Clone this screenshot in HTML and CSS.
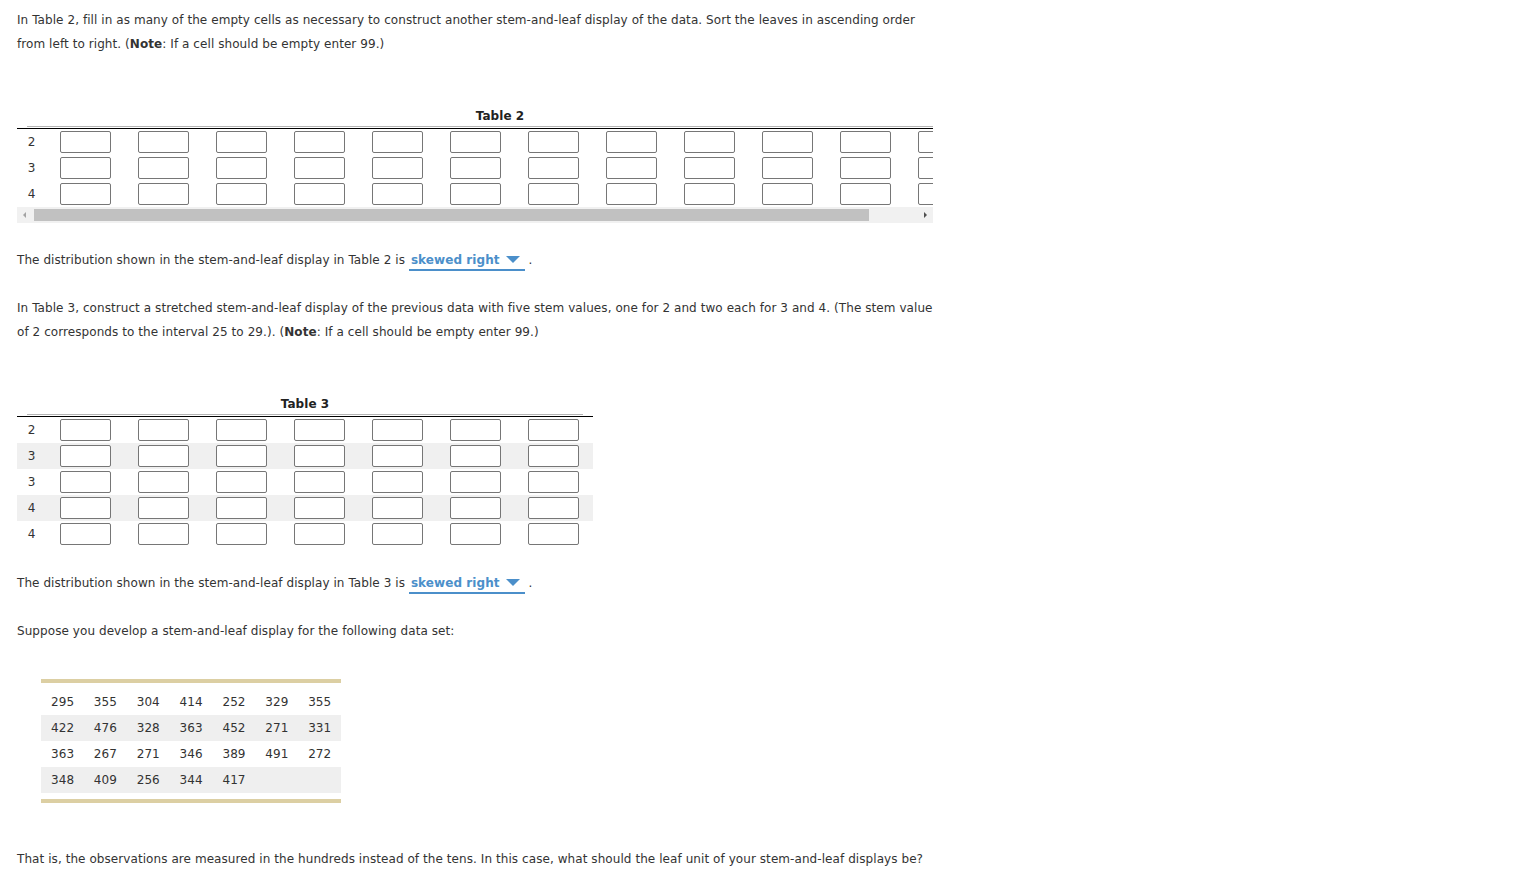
FILE: index.html
```html
<!DOCTYPE html>
<html>
<head>
<meta charset="utf-8">
<link rel="stylesheet" href="styles.css">
</head>
<body>
<div class="page">
  <p class="para">In Table 2, fill in as many of the empty cells as necessary to construct another stem-and-leaf display of the data. Sort the leaves in ascending order from left to right. (<b>Note</b>: If a cell should be empty enter 99.)</p>

  <div class="scroll-wrap t2">
    <div class="scroll-clip">
      <div class="stem-table wide">
        <div class="caption">Table 2</div>
        <div class="rule-grey"></div>
        <div class="rule-black"></div>
        <div class="row"><div class="stem">2</div><div class="cell"><span class="box"></span></div><div class="cell"><span class="box"></span></div><div class="cell"><span class="box"></span></div><div class="cell"><span class="box"></span></div><div class="cell"><span class="box"></span></div><div class="cell"><span class="box"></span></div><div class="cell"><span class="box"></span></div><div class="cell"><span class="box"></span></div><div class="cell"><span class="box"></span></div><div class="cell"><span class="box"></span></div><div class="cell"><span class="box"></span></div><div class="cell"><span class="box"></span></div></div>
        <div class="row"><div class="stem">3</div><div class="cell"><span class="box"></span></div><div class="cell"><span class="box"></span></div><div class="cell"><span class="box"></span></div><div class="cell"><span class="box"></span></div><div class="cell"><span class="box"></span></div><div class="cell"><span class="box"></span></div><div class="cell"><span class="box"></span></div><div class="cell"><span class="box"></span></div><div class="cell"><span class="box"></span></div><div class="cell"><span class="box"></span></div><div class="cell"><span class="box"></span></div><div class="cell"><span class="box"></span></div></div>
        <div class="row"><div class="stem">4</div><div class="cell"><span class="box"></span></div><div class="cell"><span class="box"></span></div><div class="cell"><span class="box"></span></div><div class="cell"><span class="box"></span></div><div class="cell"><span class="box"></span></div><div class="cell"><span class="box"></span></div><div class="cell"><span class="box"></span></div><div class="cell"><span class="box"></span></div><div class="cell"><span class="box"></span></div><div class="cell"><span class="box"></span></div><div class="cell"><span class="box"></span></div><div class="cell"><span class="box"></span></div></div>
      </div>
    </div>
    <div class="hscroll">
      <span class="arrow-left"></span>
      <span class="thumb"></span>
      <span class="arrow-right"></span>
    </div>
  </div>

  <p class="line gap-25">The distribution shown in the stem-and-leaf display in Table 2 is <span class="dropdown">skewed right<span class="caret"></span></span> .</p>

  <p class="para gap-24">In Table 3, construct a stretched stem-and-leaf display of the previous data with five stem values, one for 2 and two each for 3 and 4. (The stem value of 2 corresponds to the interval 25 to 29.). (<b>Note</b>: If a cell should be empty enter 99.)</p>

  <div class="stem-table narrow t3">
    <div class="caption">Table 3</div>
    <div class="rule-grey"></div>
    <div class="rule-black"></div>
    <div class="row"><div class="stem">2</div><div class="cell"><span class="box"></span></div><div class="cell"><span class="box"></span></div><div class="cell"><span class="box"></span></div><div class="cell"><span class="box"></span></div><div class="cell"><span class="box"></span></div><div class="cell"><span class="box"></span></div><div class="cell"><span class="box"></span></div></div>
    <div class="row shade"><div class="stem">3</div><div class="cell"><span class="box"></span></div><div class="cell"><span class="box"></span></div><div class="cell"><span class="box"></span></div><div class="cell"><span class="box"></span></div><div class="cell"><span class="box"></span></div><div class="cell"><span class="box"></span></div><div class="cell"><span class="box"></span></div></div>
    <div class="row"><div class="stem">3</div><div class="cell"><span class="box"></span></div><div class="cell"><span class="box"></span></div><div class="cell"><span class="box"></span></div><div class="cell"><span class="box"></span></div><div class="cell"><span class="box"></span></div><div class="cell"><span class="box"></span></div><div class="cell"><span class="box"></span></div></div>
    <div class="row shade"><div class="stem">4</div><div class="cell"><span class="box"></span></div><div class="cell"><span class="box"></span></div><div class="cell"><span class="box"></span></div><div class="cell"><span class="box"></span></div><div class="cell"><span class="box"></span></div><div class="cell"><span class="box"></span></div><div class="cell"><span class="box"></span></div></div>
    <div class="row"><div class="stem">4</div><div class="cell"><span class="box"></span></div><div class="cell"><span class="box"></span></div><div class="cell"><span class="box"></span></div><div class="cell"><span class="box"></span></div><div class="cell"><span class="box"></span></div><div class="cell"><span class="box"></span></div><div class="cell"><span class="box"></span></div></div>
  </div>

  <p class="line gap-24">The distribution shown in the stem-and-leaf display in Table 3 is <span class="dropdown">skewed right<span class="caret"></span></span> .</p>

  <p class="line gap-24">Suppose you develop a stem-and-leaf display for the following data set:</p>

  <div class="data">
    <div class="drow"><span>295</span><span>355</span><span>304</span><span>414</span><span>252</span><span>329</span><span>355</span></div>
    <div class="drow shade"><span>422</span><span>476</span><span>328</span><span>363</span><span>452</span><span>271</span><span>331</span></div>
    <div class="drow"><span>363</span><span>267</span><span>271</span><span>346</span><span>389</span><span>491</span><span>272</span></div>
    <div class="drow shade"><span>348</span><span>409</span><span>256</span><span>344</span><span>417</span><span></span><span></span></div>
  </div>

  <p class="line last">That is, the observations are measured in the hundreds instead of the tens. In this case, what should the leaf unit of your stem-and-leaf displays be?</p>
</div>
</body>
</html>
```

FILE: styles.css
```css
html, body {
  margin: 0;
  padding: 0;
  background: #ffffff;
}

body {
  font-family: "DejaVu Sans", Verdana, sans-serif;
  font-size: 12px;
  letter-spacing: 0.07px;
  color: #333333;
}

.page {
  padding: 8px 17px 0 17px;
}

.para, .line {
  margin: 0;
  line-height: 24px;
  width: 916px;
}

.para b {
  font-weight: bold;
}

.gap-24 { margin-top: 24px; }
.gap-25 { margin-top: 25px; }

.scroll-wrap {
  width: 916px;
  margin-top: 51px;
}

.scroll-clip {
  width: 916px;
  overflow: hidden;
}

.stem-table.wide { width: 966px; }
.stem-table.narrow { width: 576px; }
.stem-table.t3 { margin-top: 51px; }

.caption {
  text-align: center;
  font-weight: bold;
  line-height: 18px;
  height: 18px;
  margin-bottom: 1px;
  color: #222;
}

.rule-grey {
  height: 1px;
  background: #b4b4b4;
  margin: 0 10px;
}

.rule-black {
  height: 1px;
  background: #000000;
  margin-top: 1px;
}

.row {
  display: flex;
  height: 26px;
}

.row.shade { background: #f0f0f0; }

.stem {
  width: 29px;
  flex: none;
  text-align: center;
  line-height: 26px;
}

.cell {
  width: 78px;
  flex: none;
  display: flex;
  justify-content: center;
  padding-top: 2px;
  box-sizing: border-box;
}

.box {
  display: block;
  width: 51px;
  height: 22px;
  box-sizing: border-box;
  border: 1px solid #767676;
  border-radius: 2px;
  background: #ffffff;
}

.hscroll {
  position: relative;
  height: 16px;
  background: #f1f1f1;
}

.thumb {
  position: absolute;
  left: 17px;
  width: 835px;
  top: 2px;
  height: 12px;
  background: #c1c1c1;
}

.arrow-left {
  position: absolute;
  left: 6px;
  top: 5px;
  width: 0;
  height: 0;
  border-top: 3px solid transparent;
  border-bottom: 3px solid transparent;
  border-right: 3px solid #a3a3a3;
}

.arrow-right {
  position: absolute;
  left: 907px;
  top: 5px;
  width: 0;
  height: 0;
  border-top: 3px solid transparent;
  border-bottom: 3px solid transparent;
  border-left: 3px solid #505050;
}

.dropdown {
  display: inline-block;
  color: #4b8fca;
  font-weight: bold;
  line-height: 18px;
  padding: 0 2px 0 2px;
  border-bottom: 2px solid #4b8fca;
}

.caret {
  display: inline-block;
  width: 0;
  height: 0;
  margin-left: 6px;
  margin-right: 3px;
  border-left: 7px solid transparent;
  border-right: 7px solid transparent;
  border-top: 7px solid #4b8fca;
  vertical-align: 1px;
}

.data {
  width: 300px;
  margin: 36px 0 0 24px;
  border-top: 4px solid #dccfa3;
  border-bottom: 4px solid #dccfa3;
  padding: 6px 0;
}

.drow {
  display: grid;
  grid-template-columns: repeat(7, 1fr);
  height: 26px;
  line-height: 26px;
}

.drow.shade { background: #efefef; }

.drow span {
  padding-left: 10px;
}

.last {
  margin-top: 44px;
  width: 1000px;
}
```
